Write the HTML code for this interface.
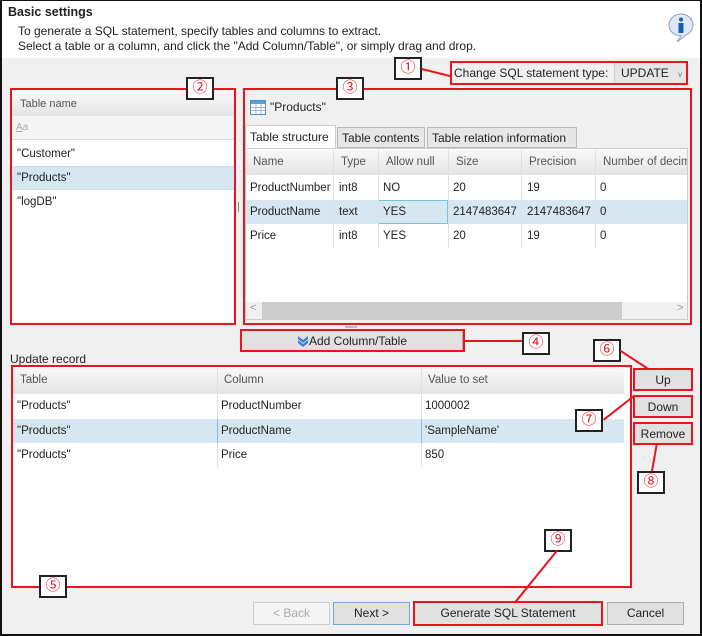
<!DOCTYPE html>
<html><head><meta charset="utf-8"><style>
*{box-sizing:border-box;margin:0;padding:0}
body{width:702px;height:636px;position:relative;background:#f0f0f0;font-family:"Liberation Sans","Noto Sans CJK JP",sans-serif;font-size:11.5px;color:#222;overflow:hidden}
.a{position:absolute}
.red{position:absolute;border:2px solid #e8141e}
.num{position:absolute;background:#fff;border:2px solid #222;color:#e8141e;font-size:15px;text-align:center;line-height:18px;width:28px;height:23px}
.ln{position:absolute;background:#e8141e;height:1.5px;transform-origin:0 0}
.hdr{background:linear-gradient(#f8f8f8,#e4e4e4);color:#555}
.btn{position:absolute;background:#e1e1e1;border:1px solid #adadad;text-align:center;line-height:20px;font-size:12px}
.cell{position:absolute;white-space:nowrap;overflow:hidden}
</style></head><body>
<div class="a" style="left:0;top:0;width:702px;height:58px;background:#fff"></div>
<div class="a" style="left:8px;top:5px;font-weight:bold;font-size:12.5px">Basic settings</div>
<div class="a" style="left:18px;top:24px;font-size:12px">To generate a SQL statement, specify tables and columns to extract.</div>
<div class="a" style="left:18px;top:39px;font-size:12px">Select a table or a column, and click the "Add Column/Table", or simply drag and drop.</div>
<svg class="a" style="left:666px;top:12px" width="30" height="32"><path d="M15 2a12 11 0 1 0 0 22l-4 6 9-7a12 11 0 0 0-5-21z" fill="#dfe8f5" stroke="#8aa3c8"/><circle cx="15" cy="7.5" r="2" fill="#1560b0"/><rect x="12.5" y="11" width="5" height="10" fill="#1560b0"/></svg>
<div class="a" style="left:0;top:0;width:702px;height:636px;border:2px solid #111;border-top:1px solid #111"></div>

<!-- 1 -->
<div class="a" style="left:454px;top:66px;font-size:12px">Change SQL statement type:</div>
<div class="a" style="left:614px;top:63px;width:72px;height:20px;background:#e6e6e6;border-left:1px solid #ccc;padding-left:6px;line-height:20px;font-size:12px">UPDATE <span style="font-size:8px;color:#777;margin-left:6px">v</span></div>
<div class="red" style="left:450px;top:61px;width:238px;height:24px"></div>
<div class="num" style="left:394px;top:57px">①</div>
<div class="ln" style="left:422px;top:68px;width:30px;transform:rotate(14deg)"></div>

<!-- 2 -->
<div class="a" style="left:12px;top:90px;width:222px;height:232px;background:#fff"></div>
<div class="a hdr" style="left:12px;top:91px;width:222px;height:25px;padding:7px 8px;font-size:11px">Table name</div>
<div class="a" style="left:12px;top:116px;width:222px;height:24px;background:#f4f4f4;border-bottom:1px solid #ddd;padding:6px 4px;color:#aaa;font-size:10px"><u>A</u>a</div>
<div class="a" style="left:12px;top:166px;width:222px;height:24px;background:#d5e8f2;border-top:1px solid #c7dde9;border-bottom:1px solid #c7dde9"></div>
<div class="a" style="left:17px;top:148px">"Customer"</div>
<div class="a" style="left:17px;top:172px">"Products"</div>
<div class="a" style="left:17px;top:196px">"logDB"</div>
<div class="red" style="left:10px;top:88px;width:226px;height:237px"></div>
<div class="num" style="left:186px;top:77px">②</div>
<div class="a" style="left:238px;top:202px;width:1px;height:10px;background:#888"></div>

<!-- 3 -->
<svg class="a" style="left:250px;top:100px" width="16" height="15"><rect x="0.5" y="0.5" width="15" height="14" fill="#fff" stroke="#4a90c0"/><rect x="1" y="1" width="14" height="3" fill="#5aa0d0"/><path d="M1 7.5h14M1 10.5h14M6 4v10M11 4v10" stroke="#9bc" /></svg>
<div class="a" style="left:270px;top:100px;font-size:12px">"Products"</div>
<div class="a" style="left:245px;top:125px;width:91px;height:24px;background:#fff;border:1px solid #ccc;border-bottom:none;padding:4px;font-size:12px">Table structure</div>
<div class="a" style="left:337px;top:127px;width:88px;height:21px;background:#e6e6e6;border:1px solid #bbb;padding:3px 4px;font-size:12px">Table contents</div>
<div class="a" style="left:427px;top:127px;width:150px;height:21px;background:#e6e6e6;border:1px solid #bbb;padding:3px 4px;font-size:12px">Table relation information</div>
<div class="a" style="left:245px;top:148px;width:443px;height:172px;background:#fff;border:1px solid #ccc"></div>
<div class="a hdr" style="left:246px;top:150px;width:441px;height:25px"></div>
<div class="a" style="left:246px;top:200px;width:441px;height:24px;background:#d5e8f2"></div>
<div class="a" style="left:378px;top:200px;width:70px;height:24px;border:1px solid #7fbfd8"></div>
<div class="a" style="left:333px;top:150px;width:1px;height:98px;background:#e0e0e0"></div>
<div class="a" style="left:378px;top:150px;width:1px;height:98px;background:#e0e0e0"></div>
<div class="a" style="left:448px;top:150px;width:1px;height:98px;background:#e0e0e0"></div>
<div class="a" style="left:521px;top:150px;width:1px;height:98px;background:#e0e0e0"></div>
<div class="a" style="left:595px;top:150px;width:1px;height:98px;background:#e0e0e0"></div>
<div class="cell" style="left:253px;top:156px;color:#555">Name</div>
<div class="cell" style="left:341px;top:156px;color:#555">Type</div>
<div class="cell" style="left:386px;top:156px;color:#555">Allow null</div>
<div class="cell" style="left:456px;top:156px;color:#555">Size</div>
<div class="cell" style="left:529px;top:156px;color:#555">Precision</div>
<div class="cell" style="left:603px;top:156px;width:84px;color:#555">Number of decim</div>
<div class="cell" style="left:250px;top:182px">ProductNumber</div><div class="cell" style="left:339px;top:182px">int8</div><div class="cell" style="left:383px;top:182px">NO</div><div class="cell" style="left:453px;top:182px">20</div><div class="cell" style="left:527px;top:182px">19</div><div class="cell" style="left:600px;top:182px">0</div>
<div class="cell" style="left:250px;top:206px">ProductName</div><div class="cell" style="left:339px;top:206px">text</div><div class="cell" style="left:383px;top:206px">YES</div><div class="cell" style="left:453px;top:206px">2147483647</div><div class="cell" style="left:527px;top:206px">2147483647</div><div class="cell" style="left:600px;top:206px">0</div>
<div class="cell" style="left:250px;top:230px">Price</div><div class="cell" style="left:339px;top:230px">int8</div><div class="cell" style="left:383px;top:230px">YES</div><div class="cell" style="left:453px;top:230px">20</div><div class="cell" style="left:527px;top:230px">19</div><div class="cell" style="left:600px;top:230px">0</div>
<div class="a" style="left:246px;top:302px;width:441px;height:17px;background:#f0f0f0"></div>
<div class="a" style="left:262px;top:302px;width:360px;height:17px;background:#cdcdcd"></div>
<div class="a" style="left:250px;top:302px;color:#999;font-size:11px">&lt;</div>
<div class="a" style="left:677px;top:302px;color:#999;font-size:11px">&gt;</div>
<div class="red" style="left:243px;top:88px;width:449px;height:237px"></div>
<div class="num" style="left:336px;top:77px">③</div>
<div class="a" style="left:345px;top:326px;width:12px;height:2px;background:#bbb"></div>

<!-- 4 -->
<div class="btn" style="left:241px;top:330px;width:222px;height:21px"><svg width="12" height="12" style="vertical-align:-2px"><path d="M1 1l5 4 5-4v3l-5 4-5-4zM1 5l5 4 5-4v3l-5 4-5-4z" fill="#3a7fd8"/></svg>Add Column/Table</div>
<div class="red" style="left:240px;top:329px;width:225px;height:23px"></div>
<div class="ln" style="left:465px;top:340px;width:58px"></div>
<div class="num" style="left:522px;top:332px">④</div>

<!-- 5 -->
<div class="a" style="left:10px;top:352px;font-size:12px">Update record</div>
<div class="a" style="left:12px;top:366px;width:618px;height:220px;background:#fff"></div>
<div class="a hdr" style="left:13px;top:368px;width:611px;height:26px"></div>
<div class="a" style="left:13px;top:419px;width:611px;height:24px;background:#d5e8f2"></div>
<div class="a" style="left:217px;top:368px;width:1px;height:100px;background:#e0e0e0"></div>
<div class="a" style="left:421px;top:368px;width:1px;height:100px;background:#e0e0e0"></div>
<div class="a" style="left:217px;top:419px;width:1px;height:24px;background:#7fbfd8"></div>
<div class="a" style="left:421px;top:419px;width:1px;height:24px;background:#7fbfd8"></div>
<div class="cell" style="left:20px;top:374px;color:#555">Table</div><div class="cell" style="left:224px;top:374px;color:#555">Column</div><div class="cell" style="left:428px;top:374px;color:#555">Value to set</div>
<div class="cell" style="left:17px;top:400px">"Products"</div><div class="cell" style="left:221px;top:400px">ProductNumber</div><div class="cell" style="left:425px;top:400px">1000002</div>
<div class="cell" style="left:17px;top:425px">"Products"</div><div class="cell" style="left:221px;top:425px">ProductName</div><div class="cell" style="left:425px;top:425px">'SampleName'</div>
<div class="cell" style="left:17px;top:449px">"Products"</div><div class="cell" style="left:221px;top:449px">Price</div><div class="cell" style="left:425px;top:449px">850</div>
<div class="red" style="left:11px;top:365px;width:621px;height:223px"></div>
<div class="num" style="left:39px;top:575px">⑤</div>

<!-- 6 7 8 -->
<div class="btn" style="left:634px;top:369px;width:58px;height:21px">Up</div>
<div class="red" style="left:633px;top:368px;width:60px;height:23px"></div>
<div class="btn" style="left:634px;top:396px;width:58px;height:21px">Down</div>
<div class="red" style="left:633px;top:395px;width:60px;height:23px"></div>
<div class="btn" style="left:634px;top:423px;width:58px;height:21px">Remove</div>
<div class="red" style="left:633px;top:422px;width:60px;height:23px"></div>
<div class="num" style="left:593px;top:339px">⑥</div>
<div class="ln" style="left:621px;top:350px;width:32px;transform:rotate(33deg)"></div>
<div class="num" style="left:575px;top:409px">⑦</div>
<div class="ln" style="left:603px;top:419px;width:38px;transform:rotate(-38deg)"></div>
<div class="num" style="left:637px;top:471px">⑧</div>
<div class="ln" style="left:651px;top:471px;width:27px;transform:rotate(-80deg)"></div>

<!-- bottom -->
<div class="btn" style="left:253px;top:602px;width:77px;height:23px;color:#aaa;background:#f4f4f4;border-color:#ccc">&lt; Back</div>
<div class="btn" style="left:333px;top:602px;width:77px;height:23px;border-color:#6fa8dc">Next &gt;</div>
<div class="btn" style="left:414px;top:602px;width:188px;height:23px">Generate SQL Statement</div>
<div class="red" style="left:413px;top:601px;width:190px;height:25px"></div>
<div class="btn" style="left:607px;top:602px;width:77px;height:23px">Cancel</div>
<div class="num" style="left:544px;top:529px">⑨</div>
<div class="ln" style="left:558px;top:551px;width:67px;transform:rotate(129deg)"></div>
</body></html>
